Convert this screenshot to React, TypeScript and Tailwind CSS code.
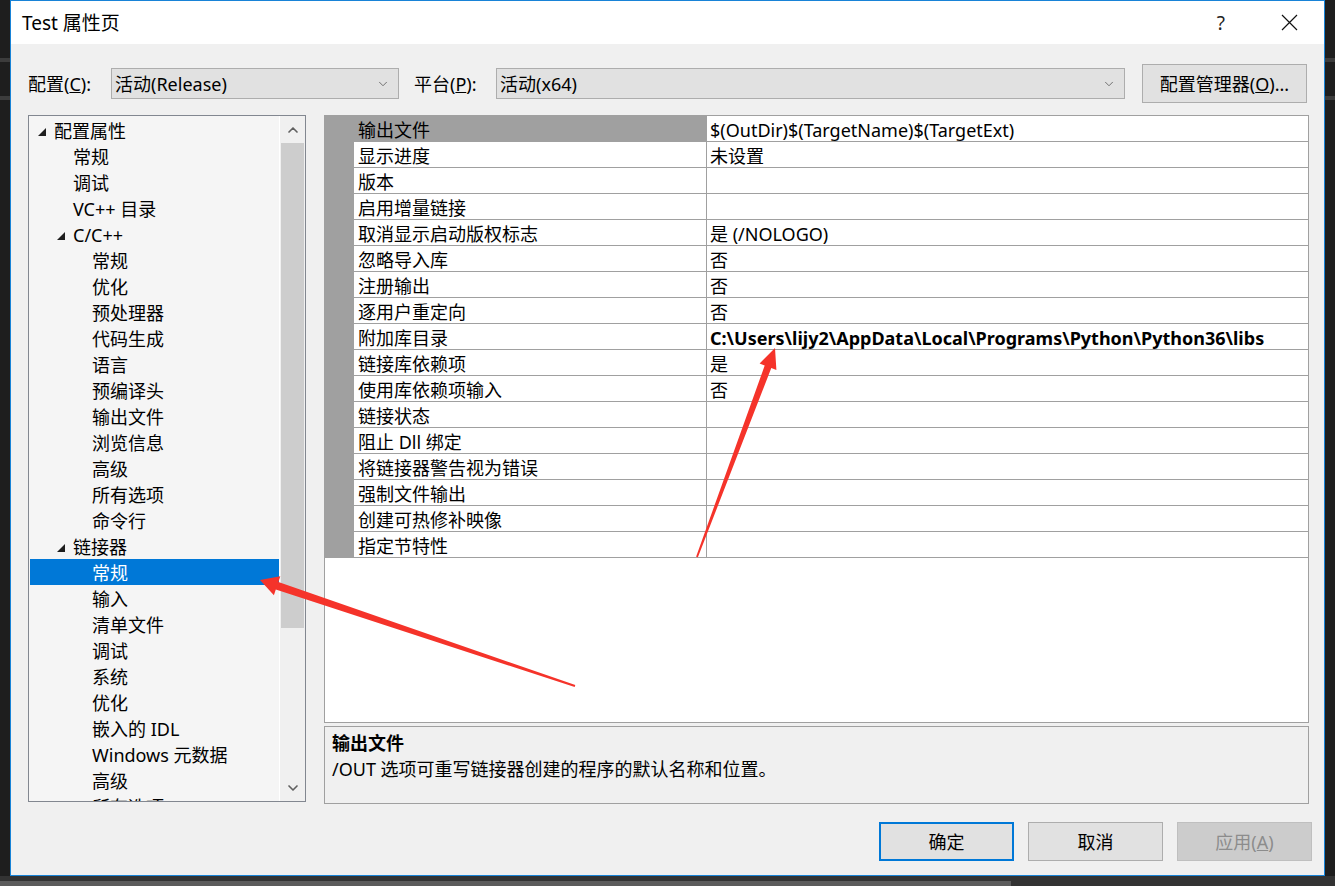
import { ChevronDown, ChevronUp } from 'lucide-react'

type TreeItem = { label: string; level: number; expanded?: boolean; selected?: boolean }

const TREE: TreeItem[] = [
  { label: '配置属性', level: 0, expanded: true },
  { label: '常规', level: 1 },
  { label: '调试', level: 1 },
  { label: 'VC++ 目录', level: 1 },
  { label: 'C/C++', level: 1, expanded: true },
  { label: '常规', level: 2 },
  { label: '优化', level: 2 },
  { label: '预处理器', level: 2 },
  { label: '代码生成', level: 2 },
  { label: '语言', level: 2 },
  { label: '预编译头', level: 2 },
  { label: '输出文件', level: 2 },
  { label: '浏览信息', level: 2 },
  { label: '高级', level: 2 },
  { label: '所有选项', level: 2 },
  { label: '命令行', level: 2 },
  { label: '链接器', level: 1, expanded: true },
  { label: '常规', level: 2, selected: true },
  { label: '输入', level: 2 },
  { label: '清单文件', level: 2 },
  { label: '调试', level: 2 },
  { label: '系统', level: 2 },
  { label: '优化', level: 2 },
  { label: '嵌入的 IDL', level: 2 },
  { label: 'Windows 元数据', level: 2 },
  { label: '高级', level: 2 },
  { label: '所有选项', level: 2 },
]

const PROPS: { name: string; value: string; bold?: boolean }[] = [
  { name: '输出文件', value: '$(OutDir)$(TargetName)$(TargetExt)' },
  { name: '显示进度', value: '未设置' },
  { name: '版本', value: '' },
  { name: '启用增量链接', value: '' },
  { name: '取消显示启动版权标志', value: '是 (/NOLOGO)' },
  { name: '忽略导入库', value: '否' },
  { name: '注册输出', value: '否' },
  { name: '逐用户重定向', value: '否' },
  { name: '附加库目录', value: 'C:\\Users\\lijy2\\AppData\\Local\\Programs\\Python\\Python36\\libs', bold: true },
  { name: '链接库依赖项', value: '是' },
  { name: '使用库依赖项输入', value: '否' },
  { name: '链接状态', value: '' },
  { name: '阻止 Dll 绑定', value: '' },
  { name: '将链接器警告视为错误', value: '' },
  { name: '强制文件输出', value: '' },
  { name: '创建可热修补映像', value: '' },
  { name: '指定节特性', value: '' },
]

const indent = ['pl-[24px]', 'pl-[43px]', 'pl-[62px]']

function Triangle() {
  return (
    <svg width="8" height="8" viewBox="0 0 8 8" className="absolute -left-[16px] top-[9px]">
      <polygon points="8,0 8,8 0,8" fill="#1e1e1e" />
    </svg>
  )
}

function Select({ text, width }: { text: string; width: string }) {
  return (
    <div className={`flex h-[31px] ${width} items-center justify-between border border-[#adadad] bg-[#e1e1e1] pl-[3px] pr-[8px]`}>
      <span className="pt-[1px]">{text}</span>
      <ChevronDown size={14} strokeWidth={1.5} className="text-[#606060]" />
    </div>
  )
}

export default function App() {
  return (
    <div className="relative flex h-[886px] w-[1335px] flex-col overflow-hidden bg-[#1e1e1e] font-['Noto_Sans','Noto_Sans_CJK_SC',sans-serif] text-[18px] leading-[24px] text-black">
      <div className="flex h-[876px]">
        <div className="flex w-[10px] flex-col">
          <div className="mt-[58px] h-[4px] bg-[#3c3c3c]" />
          <div className="mt-[34px] h-[4px] bg-[#3c3c3c]" />
        </div>

        <div className="flex w-[1315px] flex-col border border-[#1883d7] bg-[#f0f0f0]">
          {/* title bar */}
          <div className="flex h-[43px] items-center bg-white pl-[11px] pr-[26px]">
            <span className="text-[19px]">Test 属性页</span>
            <span className="ml-auto text-[19px] text-[#222]">?</span>
            <svg width="17" height="17" viewBox="0 0 17 17" className="ml-[56px]">
              <path d="M1 1 L16 16 M16 1 L1 16" stroke="#111" strokeWidth="1.2" />
            </svg>
          </div>

          {/* config row */}
          <div className="mt-[20px] flex h-[39px] items-center pl-[17px]">
            <span className="w-[83px] pt-[1px]">
              配置(<span className="underline">C</span>):
            </span>
            <Select text="活动(Release)" width="w-[288px]" />
            <span className="ml-[15px] w-[82px] pt-[1px]">
              平台(<span className="underline">P</span>):
            </span>
            <Select text="活动(x64)" width="w-[629px]" />
            <button className="ml-[17px] flex h-[39px] w-[165px] items-center justify-center border border-[#adadad] bg-[#e1e1e1]">
              配置管理器(<span className="underline">O</span>)...
            </button>
          </div>

          {/* main */}
          <div className="mt-[12px] flex pl-[17px]">
            {/* tree */}
            <div className="flex h-[687px] w-[278px] border border-[#828790] bg-[#f5f5f5]">
              <div className="flex-1 overflow-hidden pl-[1px] pt-[1px]">
                {TREE.map((item, i) => (
                  <div
                    key={i}
                    className={`flex h-[26px] items-center whitespace-nowrap pt-[2px] ${indent[item.level]} ${
                      item.selected ? 'bg-[#0078d7] text-white' : ''
                    }`}
                  >
                    <span className="relative">
                      {item.expanded && <Triangle />}
                      {item.label}
                    </span>
                  </div>
                ))}
              </div>
              <div className="flex w-[26px] flex-col border-l border-white bg-[#f0f0f0]">
                <div className="flex h-[27px] items-center justify-center">
                  <ChevronUp size={16} strokeWidth={2.5} className="text-[#606060]" />
                </div>
                <div className="mx-[1px] h-[485px] bg-[#cdcdcd]" />
                <div className="flex-1" />
                <div className="flex h-[27px] items-center justify-center">
                  <ChevronDown size={16} strokeWidth={2.5} className="text-[#606060]" />
                </div>
              </div>
            </div>

            {/* property grid + description */}
            <div className="ml-[18px] flex w-[985px] flex-col">
              <div className="h-[608px] border border-[#a0a0a0] bg-white">
                {PROPS.map((p, i) => (
                  <div key={i} className="flex h-[26px]">
                    <div className="w-[29px] bg-[#a0a0a0]" />
                    <div
                      className={`flex w-[353px] items-center whitespace-nowrap border-b border-r border-[#a0a0a0] pl-[4px] pt-[2px] ${
                        i === 0 ? 'bg-[#a0a0a0]' : ''
                      }`}
                    >
                      {p.name}
                    </div>
                    <div
                      className={`flex flex-1 items-center whitespace-nowrap border-b border-[#a0a0a0] pl-[3px] pt-[2px] ${
                        p.bold ? 'font-bold' : ''
                      }`}
                    >
                      {p.value}
                    </div>
                  </div>
                ))}
              </div>
              <div className="mt-[3px] h-[78px] border border-[#a0a0a0] bg-[#f0f0f0] px-[7px] pt-[3px] leading-[26px]">
                <div className="font-bold">输出文件</div>
                <div>/OUT 选项可重写链接器创建的程序的默认名称和位置。</div>
              </div>
            </div>
          </div>

          {/* buttons */}
          <div className="mt-[18px] flex justify-end gap-[14px] pr-[12px]">
            <button className="h-[39px] w-[135px] border-2 border-[#0078d7] bg-[#e1e1e1]">确定</button>
            <button className="h-[39px] w-[135px] border border-[#adadad] bg-[#e1e1e1]">取消</button>
            <button className="h-[39px] w-[135px] border border-[#bfbfbf] bg-[#cccccc] text-[#8c8c8c]">
              应用(<span className="underline">A</span>)
            </button>
          </div>
        </div>

        <div className="flex w-[10px] flex-col">
          <div className="mt-[58px] h-[4px] bg-[#3c3c3c]" />
          <div className="mt-[34px] h-[4px] bg-[#3c3c3c]" />
        </div>
      </div>

      <div className="flex flex-1 flex-col bg-[#333333]">
        <div className="h-[5px]" />
        <div className="h-[5px] w-[1011px] bg-[#5c5c5c]" />
      </div>

      {/* annotation arrows */}
      <svg className="pointer-events-none absolute left-0 top-0" width="1335" height="886">
        <polygon
          points="260,580 280.3,576.2 278.4,581.9 575.3,685.1 574.7,687 275.8,589.5 273.9,595.2"
          fill="#f5332a"
        />
        <polygon
          points="775,348 776.4,369.9 771.3,368 697.9,557.3 696.1,556.7 764.7,365.5 759.6,363.5"
          fill="#f5332a"
        />
      </svg>
    </div>
  )
}
